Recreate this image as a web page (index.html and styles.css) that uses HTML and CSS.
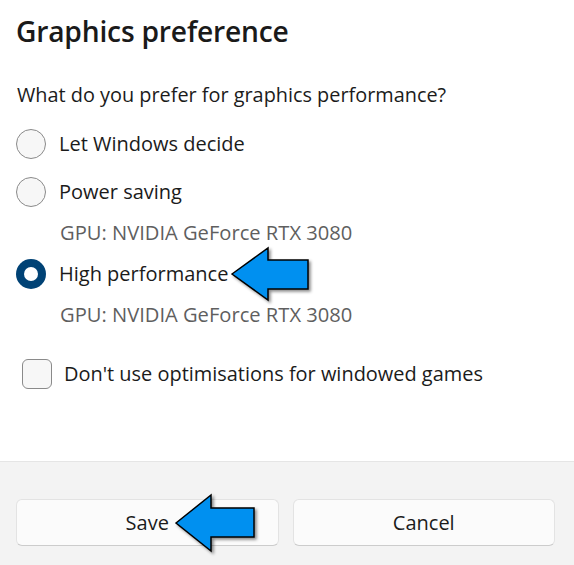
FILE: index.html
```html
<!DOCTYPE html>
<html lang="en">
<head>
<meta charset="utf-8">
<title>Graphics preference</title>
<link rel="stylesheet" href="styles.css">
</head>
<body>
<div class="dialog">
  <div class="content">
    <h1 class="title">Graphics preference</h1>
    <p class="question">What do you prefer for graphics performance?</p>
    <div class="options">
      <div class="option opt-1"><span class="radio"></span><span class="label">Let Windows decide</span></div>
      <div class="option opt-2"><span class="radio"></span><span class="label">Power saving</span></div>
      <div class="gpu gpu-1">GPU: NVIDIA GeForce RTX 3080</div>
      <div class="option opt-3"><span class="radio checked"></span><span class="label">High performance</span></div>
      <div class="gpu gpu-2">GPU: NVIDIA GeForce RTX 3080</div>
      <div class="check-row"><span class="checkbox"></span><span class="label">Don't use optimisations for windowed games</span></div>
    </div>
  </div>
  <div class="footer">
    <button class="btn">Save</button>
    <button class="btn">Cancel</button>
  </div>
  <svg class="arrows" width="574" height="565" viewBox="0 0 574 565" aria-hidden="true">
    <polygon class="arrow" points="232,274 268,248 268,260 308,260 308,289 268,289 268,300"/>
    <polygon class="arrow" points="176,523 211,495 211,508 254,508 254,537 211,537 211,551"/>
  </svg>
</div>
</body>
</html>
```
FILE: styles.css
```css
* { box-sizing: border-box; }
html, body {
  margin: 0;
  padding: 0;
  background: #ffffff;
}
body {
  width: 574px;
  height: 565px;
  overflow: hidden;
  font-family: "Open Sans", "Noto Sans", sans-serif;
  color: #1b1b1b;
}
.dialog {
  position: relative;
  width: 574px;
  height: 565px;
  display: flex;
  flex-direction: column;
}
.content {
  flex: 1;
  padding: 11px 16px 0 16px;
}
.title {
  margin: 0;
  font-size: 28.2px;
  font-weight: 600;
  line-height: 40px;
  letter-spacing: -0.2px;
  color: #1a1a1a;
}
.question {
  margin: 29px 0 0 1px;
  font-size: 19.86px;
  line-height: 30px;
}
.options {
  display: flex;
  flex-direction: column;
  margin-top: 19px;
}
.option {
  display: flex;
  align-items: center;
  gap: 13px;
  height: 30px;
}
.label {
  font-size: 20px;
  line-height: 30px;
}
.opt-2 { margin-top: 18px; }
.opt-3 { margin-top: 12px; }
.gpu {
  margin-top: 10px;
  padding-left: 44px;
  font-size: 20.15px;
  line-height: 30px;
  color: #5f5f5f;
}
.radio {
  width: 30px;
  height: 30px;
  flex: none;
  border-radius: 50%;
  border: 1.5px solid #8a8a8a;
  background: #f7f7f7;
}
.radio.checked {
  border: none;
  background: #004275;
  display: flex;
  align-items: center;
  justify-content: center;
}
.radio.checked::after {
  content: "";
  width: 14px;
  height: 14px;
  border-radius: 50%;
  background: #ffffff;
}
.check-row {
  display: flex;
  align-items: center;
  gap: 12px;
  height: 30px;
  margin-top: 30px;
  padding-left: 6px;
}
.check-row .label {
  font-size: 19.96px;
}
.checkbox {
  width: 30px;
  height: 30px;
  flex: none;
  border-radius: 6px;
  border: 1.5px solid #8a8a8a;
  background: #f7f7f7;
}
.footer {
  height: 104px;
  flex: none;
  background: #f3f3f3;
  border-top: 1px solid #e5e5e5;
  display: grid;
  grid-template-columns: 1fr 1fr;
  gap: 14px;
  padding: 37px 19px 0 16px;
  align-content: start;
}
.btn {
  height: 47px;
  border-radius: 6px;
  border: 1px solid #e3e3e3;
  border-bottom-color: #cccccc;
  background: #fbfbfb;
  font-family: "Open Sans", "Noto Sans", sans-serif;
  font-size: 20px;
  color: #1b1b1b;
  padding: 0;
}
.arrows {
  position: absolute;
  left: 0;
  top: 0;
  pointer-events: none;
}
.arrow {
  fill: #0090f0;
  stroke: #000000;
  stroke-width: 1.5;
  stroke-linejoin: miter;
  filter: drop-shadow(2px 2px 1.5px rgba(0, 0, 0, 0.45));
}
```
